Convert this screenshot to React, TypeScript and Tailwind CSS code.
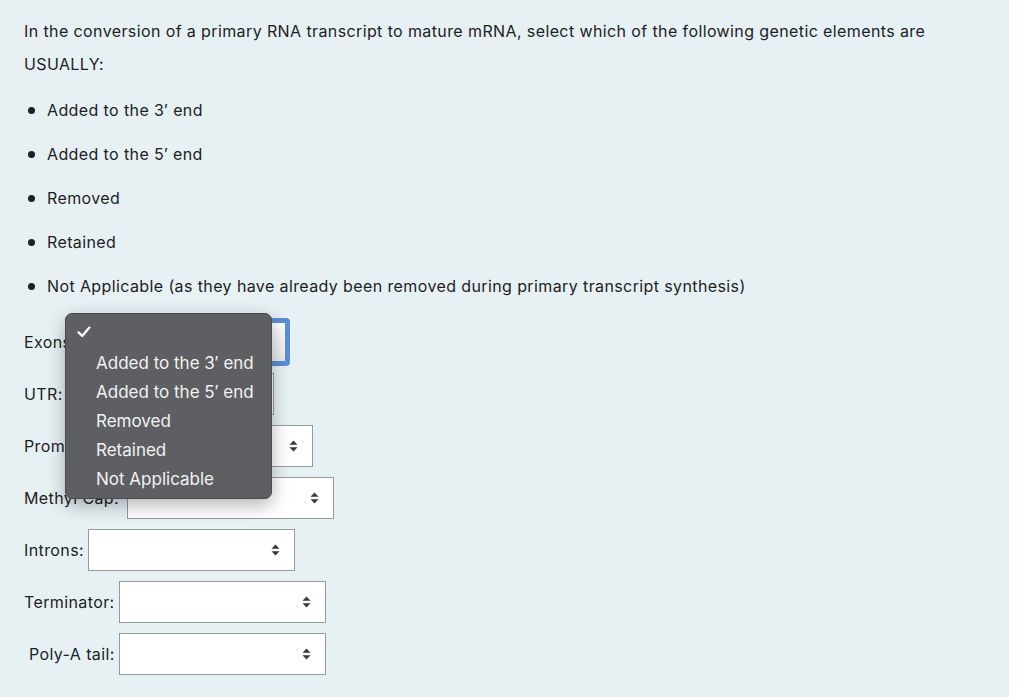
import React from 'react';

const bullets = [
  'Added to the 3′ end',
  'Added to the 5′ end',
  'Removed',
  'Retained',
  'Not Applicable (as they have already been removed during primary transcript synthesis)',
];

const options = ['Added to the 3′ end', 'Added to the 5′ end', 'Removed', 'Retained', 'Not Applicable'];

const rows = [
  { label: 'Exons:', focused: true },
  { label: 'UTR:' },
  { label: 'Promoter:' },
  { label: 'Methyl Cap:', wide: true },
  { label: 'Introns:' },
  { label: 'Terminator:' },
  { label: 'Poly-A tail:', indent: true },
];

const Arrows: React.FC = () => (
  <svg width="9" height="12" viewBox="0 0 9 12" className="text-[#343a40]">
    <path d="M4.5 0.5 L8.5 4.8 L0.5 4.8 Z" fill="currentColor" />
    <path d="M4.5 11.5 L8.5 7.2 L0.5 7.2 Z" fill="currentColor" />
  </svg>
);

const SelectBox: React.FC<{ focused?: boolean; wide?: boolean }> = ({ focused, wide }) => (
  <div
    className={
      focused
        ? 'ml-1 w-[207px] h-[42px] rounded-[1px] border-2 border-[#5b8fd6] outline outline-[3px] outline-[#5b8fd6] bg-gradient-to-b from-[#ffffff] to-[#e9e9e9] flex items-center justify-end pr-[14px]'
        : wide
        ? 'ml-[8px] w-[207px] h-[42px] border border-[#959ba1] bg-white flex items-center justify-end pr-[14px]'
        : 'ml-1 w-[207px] h-[42px] border border-[#959ba1] bg-white flex items-center justify-end pr-[14px]'
    }
  >
    <Arrows />
  </div>
);

const DropdownMenu: React.FC = () => (
  <div className="absolute left-[41px] top-[-8px] w-[207px] h-[186px] rounded-[7px] bg-[#5d5f62] border border-[#4a4c4f] shadow-[0_6px_18px_rgba(0,0,0,0.3)] z-10 pt-[6px] text-[17px] text-[#f2f2f2] leading-[29px] tracking-normal">
    <div className="relative h-[29px] pl-[30px]">
      <svg width="14" height="12" viewBox="0 0 14 12" className="absolute left-[11px] top-[6px]">
        <path d="M1.6 6.4 L5.2 10 L12.4 1.6" fill="none" stroke="#ffffff" strokeWidth="2.3" strokeLinecap="round" strokeLinejoin="round" />
      </svg>
    </div>
    {options.map((o) => (
      <div key={o} className="pl-[30px] whitespace-nowrap">
        {o}
      </div>
    ))}
  </div>
);

export default function App() {
  return (
    <div className="min-h-screen bg-white font-['Inter',sans-serif] text-[#1d2125] tracking-[0.39px]">
      <div className="w-[1009px] h-[697px] bg-[#e7f1f4] pl-6 pt-[15px]">
        <p className="text-[16px] leading-[33px] w-[930px]">
          In the conversion of a primary RNA transcript to mature mRNA, select which of the following genetic elements are USUALLY:
        </p>
        <ul className="mt-[7px]">
          {bullets.map((b) => (
            <li key={b} className="flex items-center h-[44px] text-[16px]">
              <span className="w-[7px] h-[7px] rounded-full bg-[#1d2125] ml-[4px] mr-[12px]" />
              {b}
            </li>
          ))}
        </ul>
        <div className="mt-[13px] flex flex-col gap-[10px]">
          {rows.map((r) => (
            <div key={r.label} className="relative flex items-center h-[42px] text-[16px]">
              <span className={r.indent ? 'pl-[5px]' : ''}>{r.label}</span>
              <SelectBox focused={r.focused} wide={r.wide} />
              {r.focused && <DropdownMenu />}
            </div>
          ))}
        </div>
      </div>
    </div>
  );
}
